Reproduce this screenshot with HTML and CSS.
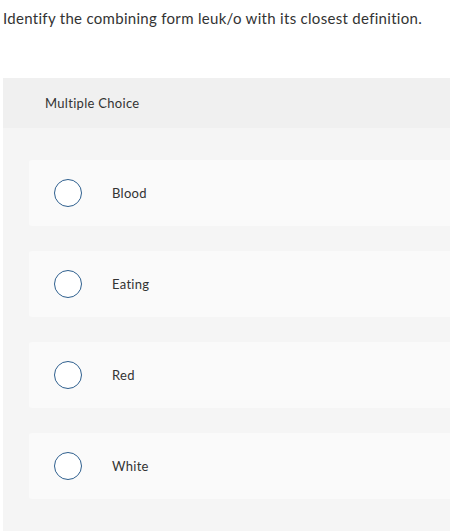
FILE: index.html
```html
<!DOCTYPE html>
<html>
<head>
<meta charset="utf-8">
<link rel="stylesheet" href="styles.css">
</head>
<body>
<div class="page">
  <p class="question">Identify the combining form leuk/o with its closest definition.</p>
  <div class="panel">
    <div class="panel-head">Multiple Choice</div>
    <div class="options">
      <div class="option"><span class="radio"></span><span class="label">Blood</span></div>
      <div class="option"><span class="radio"></span><span class="label">Eating</span></div>
      <div class="option"><span class="radio"></span><span class="label">Red</span></div>
      <div class="option"><span class="radio"></span><span class="label">White</span></div>
    </div>
  </div>
</div>
</body>
</html>
```

FILE: styles.css
```css
html, body {
  margin: 0;
  padding: 0;
  background: #ffffff;
  overflow: hidden;
}
.page {
  padding-left: 3px;
  font-family: Lato, "Open Sans", sans-serif;
  letter-spacing: 0.3px;
  color: #333333;
}
.question {
  margin: 0;
  padding-top: 7px;
  font-size: 15px;
  line-height: 22px;
  color: #333333;
}
.panel {
  margin-top: 49px;
  margin-right: -20px;
}
.panel-head {
  background: #f0f0f0;
  height: 50px;
  padding-left: 42px;
  display: flex;
  align-items: center;
  font-size: 13px;
}
.options {
  background: #f5f5f5;
  padding: 32px 0 40px 26px;
  display: flex;
  flex-direction: column;
  gap: 25px;
}
.option {
  background: #fafafa;
  border-radius: 3px;
  height: 66px;
  display: flex;
  align-items: center;
  padding-left: 25px;
}
.radio {
  width: 26px;
  height: 26px;
  border: 1.5px solid #2e5f8e;
  border-radius: 50%;
  background: #ffffff;
  flex: none;
}
.label {
  margin-left: 30px;
  font-size: 13px;
}
```
